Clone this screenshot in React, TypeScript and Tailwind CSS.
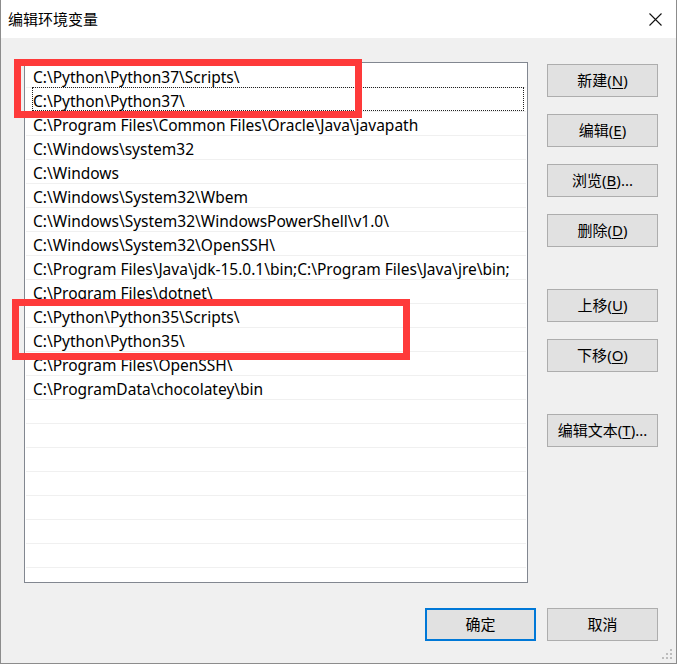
const entries = [
  'C:\\Python\\Python37\\Scripts\\',
  'C:\\Python\\Python37\\',
  'C:\\Program Files\\Common Files\\Oracle\\Java\\javapath',
  'C:\\Windows\\system32',
  'C:\\Windows',
  'C:\\Windows\\System32\\Wbem',
  'C:\\Windows\\System32\\WindowsPowerShell\\v1.0\\',
  'C:\\Windows\\System32\\OpenSSH\\',
  'C:\\Program Files\\Java\\jdk-15.0.1\\bin;C:\\Program Files\\Java\\jre\\bin;',
  'C:\\Program Files\\dotnet\\',
  'C:\\Python\\Python35\\Scripts\\',
  'C:\\Python\\Python35\\',
  'C:\\Program Files\\OpenSSH\\',
  'C:\\ProgramData\\chocolatey\\bin',
]

const rows = [...entries, ...Array(8).fill('')]

const DlgButton = ({
  label,
  hotkey,
  tail = '',
  primary = false,
}: {
  label: string
  hotkey?: string
  tail?: string
  primary?: boolean
}) => (
  <button
    className={
      'w-[111px] h-[33px] bg-[#e1e1e1] flex items-center justify-center text-[15px] text-black ' +
      (primary ? 'border-2 border-[#0078d7]' : 'border border-[#adadad]')
    }
  >
    <span>{label}</span>
    {hotkey && (
      <span>
        (<span className="underline underline-offset-2">{hotkey}</span>){tail}
      </span>
    )}
  </button>
)

export default function App() {
  return (
    <div className="relative w-[677px] h-[664px] bg-[#f0f0f0] border-x border-b border-[#8c8c8c] flex flex-col font-['Noto_Sans','Noto_Sans_CJK_SC',sans-serif] text-black">
      {/* title bar */}
      <header className="h-[38px] bg-white flex items-center justify-between pl-[7px] pr-[14px]">
        <span className="text-[15px] font-['Noto_Sans_CJK_SC',sans-serif]">编辑环境变量</span>
        <svg width="13" height="13" viewBox="0 0 13 13">
          <path d="M0.5 0.5L12.5 12.5M12.5 0.5L0.5 12.5" stroke="#111" strokeWidth="1.1" fill="none" />
        </svg>
      </header>

      <main className="flex-1 flex flex-col pl-[23px] pr-[18px] pt-[24px]">
        <div className="flex gap-[19px]">
          {/* path list */}
          <section className="w-[504px] h-[521px] bg-white border border-[#828790] overflow-hidden pt-px px-px">
            {rows.map((text, i) => (
              <div
                key={i}
                className="relative h-[24px] border-b border-[#f0f0f0] flex items-center pl-[7px] pt-[4px] text-[15.5px] whitespace-nowrap"
              >
                {text}
                {i === 1 && (
                  <span className="absolute left-[6px] right-[2px] top-[-1px] bottom-0 border border-dotted border-[#222]" />
                )}
              </div>
            ))}
          </section>

          {/* action buttons */}
          <aside className="flex flex-col pt-[2px]">
            <div className="flex flex-col gap-[17px]">
              <DlgButton label="新建" hotkey="N" />
              <DlgButton label="编辑" hotkey="E" />
              <DlgButton label="浏览" hotkey="B" tail="..." />
              <DlgButton label="删除" hotkey="D" />
            </div>
            <div className="flex flex-col gap-[17px] mt-[42px]">
              <DlgButton label="上移" hotkey="U" />
              <DlgButton label="下移" hotkey="O" />
            </div>
            <div className="mt-[42px]">
              <DlgButton label="编辑文本" hotkey="T" tail="..." />
            </div>
          </aside>
        </div>

        <footer className="flex justify-end gap-[11px] mt-[25px]">
          <DlgButton label="确定" primary />
          <DlgButton label="取消" />
        </footer>
      </main>

      {/* red annotation boxes */}
      <div className="absolute left-[13px] top-[59px] w-[348px] h-[59px] border-[7px] border-[#fe3a3a]" />
      <div className="absolute left-[11px] top-[299px] w-[398px] h-[61px] border-[7px] border-[#fe3a3a]" />

      {/* resize grip */}
      <svg className="absolute right-[3px] bottom-[3px]" width="11" height="11" viewBox="0 0 11 11">
        <g fill="#bdbdbd">
          <rect x="8" y="0" width="2" height="2" />
          <rect x="4" y="4" width="2" height="2" />
          <rect x="8" y="4" width="2" height="2" />
          <rect x="0" y="8" width="2" height="2" />
          <rect x="4" y="8" width="2" height="2" />
          <rect x="8" y="8" width="2" height="2" />
        </g>
      </svg>
    </div>
  )
}
